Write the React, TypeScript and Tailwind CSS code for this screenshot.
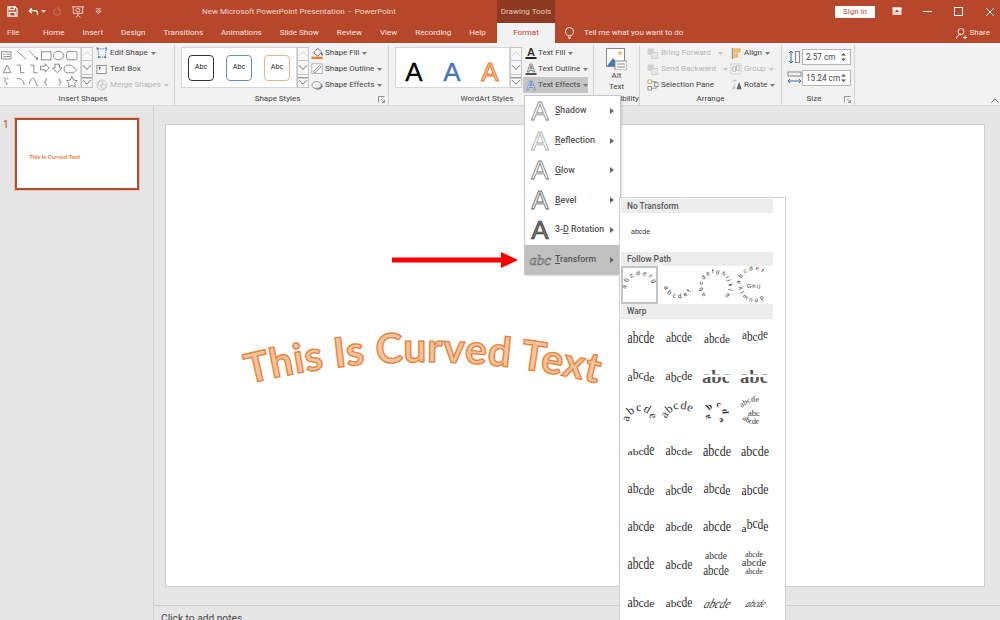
import React from "react";

const ui = "font-['Roboto',sans-serif]";

function Caret({ color = "#777", className = "ml-[3px]" }: { color?: string; className?: string }) {
  return (
    <svg width="5" height="3" viewBox="0 0 5 3" className={`shrink-0 ${className}`}>
      <path d="M0 0h5L2.500 3z" fill={color} />
    </svg>
  );
}

function Cmd({ icon, label, caret, disabled, className = "", caretClass }: { icon: React.ReactNode; label: string; caret?: boolean; disabled?: boolean; className?: string; caretClass?: string }) {
  return (
    <div className={`flex items-center h-[16px] whitespace-nowrap ${disabled ? "text-[#b4b4b4]" : "text-[#444]"} ${className}`}>
      <span className="w-[14px] h-[14px] flex items-center justify-start shrink-0">{icon}</span>
      <span>{label}</span>
      {caret && <Caret color={disabled ? "#c4c4c4" : "#777"} className={caretClass} />}
    </div>
  );
}

function Scroller() {
  const Cell = ({ d, line, first }: { d: string; line?: boolean; first?: boolean }) => (
    <div className={`flex-1 bg-[#f7f7f7] border border-[#c6c6c6] ${first ? "" : "border-t-0"} flex items-center justify-center`}>
      <svg width="11" height="12" viewBox="0 0 11 12" fill="none" stroke={first ? "#cfcfcf" : "#666"} strokeWidth="1">
        {line && <path d="M0 2.500h11" />}
        <path d={d} />
      </svg>
    </div>
  );
  return (
    <div className="w-[12px] h-[41px] mt-[2px] flex flex-col shrink-0">
      <Cell first d="M1 8l4.500-4.500L10 8" />
      <Cell d="M1 4l4.500 4.500L10 4" />
      <Cell line d="M1 5l4.500 4.500L10 5" />
    </div>
  );
}

function ShapeGallery() {
  return (
    <svg width="81" height="41" viewBox="0 0 81 41" fill="none" stroke="#7a7a7a" strokeWidth="0.9" className="bg-white border-y border-r border-[#d6d6d6] shrink-0 mt-[2px]">
      <rect x="0" y="4" width="10" height="7.500" />
      <path d="M2 6.500h2M5 6.500h4M2 9h7" />
      <path d="M16 3l10 9M29 3l9 9" />
      <path d="M38 12l-2-.5 1.500-1.500z" fill="#7a7a7a" />
      <rect x="42" y="4" width="10" height="8.500" />
      <ellipse cx="60" cy="8" rx="5.500" ry="4.500" />
      <rect x="68.500" y="3.500" width="11" height="9" rx="2.500" />
      <path d="M2 26l4-8 4 8z" />
      <path d="M16 18h4v8h4M30 18h4v8h4" />
      <path d="M41 19h5v-2.500l4 4.500-4 4.500v-2.500h-5z" />
      <path d="M56 17h5v4h2.500l-5 5-5-5h3z" />
      <path d="M69 18h4l6 5-3 3h-5a4 4 0 0 1-2-8z" />
      <path d="M2 31l3 2-2 2 3 2-1 2M6 31l1 2" />
      <path d="M16 32c5 0 7 2 8 7M29 38c2-8 5-8 7-2s2 3 3 3" />
      <path d="M48 32c-2 0-1 3-1.500 3.500S45 36 45 36s1.500 0 1.500 1S46 39 48 39M60 32c2 0 1 3 1.500 3.500S63 36 63 36s-1.500 0-1.500 1 .5 2-1.500 2" />
      <path d="M74 30l1.800 3.700 4 .6-2.900 2.800.7 4-3.600-1.900-3.600 1.900.7-4-2.900-2.800 4-.6z" />
    </svg>
  );
}

function StyleThumb({ c }: { c: string }) {
  return (
    <div className={`w-[26px] h-[26px] rounded-[4px] flex items-center justify-center text-[7.200px] text-[#222] bg-white ${c}`}>Abc</div>
  );
}

function Group({ label, className, children, launcher, shift }: { label: string; className: string; children: React.ReactNode; launcher?: boolean; shift?: boolean }) {
  return (
    <div className={`relative flex flex-col shrink-0 border-r border-[#d2d2d2] mt-[2px] ${className}`}>
      <div className="flex-1 flex min-h-0">{children}</div>
      <div className={`h-[13px] pt-[1px] text-center text-[8px] leading-[12px] text-[#444] whitespace-nowrap ${shift ? "pr-[8px]" : ""}`}>{label}</div>
      {launcher && (
        <svg width="7" height="7" viewBox="0 0 7 7" fill="none" stroke="#777" strokeWidth="0.8" className="absolute right-[3px] bottom-[2px]">
          <path d="M.5 6.500v-6h6M3 3l3 3M4 6.500h2.500V4" />
        </svg>
      )}
    </div>
  );
}

const WA = ({ fill, stroke, sw = 1 }: { fill: string; stroke: string; sw?: number }) => (
  <svg width="36" height="36" viewBox="0 0 36 36" className="shrink-0 overflow-visible">
    <text x="18" y="30.500" textAnchor="middle" fontSize="26" fontFamily="'Liberation Sans',sans-serif" fill={fill} stroke={stroke} strokeWidth={sw}>A</text>
  </svg>
);

function MiniA({ under, blue }: { under?: string; blue?: boolean }) {
  return (
    <svg width="14" height="14" viewBox="0 0 14 14" className="overflow-visible">
      <text x="7" y={under ? 10 : 12} textAnchor="middle" fontSize={under ? 11 : 13} fontFamily="'Liberation Sans',sans-serif" fontWeight="700" fill={blue ? "#dfe9f7" : under === "#222" ? "#333" : "#fff"} stroke={blue ? "#4472c4" : "#444"} strokeWidth={under === "#222" ? 0 : 0.6}>A</text>
      {under && <rect x="1.500" y="11" width="11" height="2" fill={under} />}
    </svg>
  );
}

const Ico = {
  edit: (
    <svg width="12" height="12" viewBox="0 0 13 13" fill="none" stroke="#40648f" strokeWidth="0.9" strokeDasharray="1.500 1">
      <path d="M2 2h9l-1 9H3z" />
      <rect x="0.500" y="0.500" width="2" height="2" fill="#4a7ebb" stroke="none" />
      <rect x="10" y="0.500" width="2" height="2" fill="#4a7ebb" stroke="none" />
      <rect x="2" y="10" width="2" height="2" fill="#4a7ebb" stroke="none" />
      <rect x="9" y="10" width="2" height="2" fill="#4a7ebb" stroke="none" />
    </svg>
  ),
  box: (
    <svg width="11" height="11" viewBox="0 0 12 12" fill="#fff" stroke="#777" strokeWidth="0.9">
      <rect x="1" y="1.500" width="10" height="9" />
      <path d="M3 3.500h2M4 3.500v3" stroke="#333" />
    </svg>
  ),
  merge: (
    <svg width="12" height="12" viewBox="0 0 13 13" fill="none" stroke="#c4c4c4">
      <circle cx="6.500" cy="6.500" r="5.500" />
      <circle cx="5" cy="5" r="2.500" />
      <circle cx="8" cy="8" r="2.500" />
    </svg>
  ),
  fill: (
    <svg width="13" height="14" viewBox="0 0 14 14" fill="none" stroke="#555" strokeWidth="0.9">
      <path d="M3 7l4-5 4.500 4-4 4.500z" fill="#fff" />
      <path d="M11.500 7c1 1.500 1 2.500.5 2.500s-.5-1-.5-2.500z" fill="#444" />
      <rect x="0.500" y="11" width="12" height="2.500" fill="#ed7d31" stroke="none" />
    </svg>
  ),
  outline: (
    <svg width="12" height="12" viewBox="0 0 14 14" fill="none" stroke="#5f7fa8" strokeWidth="0.9">
      <rect x="1" y="1" width="12" height="11" stroke="#999" fill="#fff" />
      <path d="M3 10L10 3l1.500 1.500L4.500 11.500z" fill="#fff" stroke="#666" />
    </svg>
  ),
  effects: (
    <svg width="12" height="12" viewBox="0 0 14 13">
      <ellipse cx="8" cy="8" rx="5.500" ry="4" fill="#8a8a8a" />
      <ellipse cx="6.500" cy="6.500" rx="5.500" ry="4" fill="#efefef" stroke="#777" strokeWidth="0.8" />
    </svg>
  ),
  bring: (
    <svg width="11" height="11" viewBox="0 0 12 12" fill="#d2d2d2">
      <rect x="0.500" y="0.500" width="7" height="7" />
      <rect x="5" y="5" width="6.500" height="6.500" fill="#e6e6e6" stroke="#cdcdcd" />
    </svg>
  ),
  pane: (
    <svg width="12" height="12" viewBox="0 0 13 13" fill="none" stroke="#777" strokeWidth="0.8">
      <rect x="1" y="1" width="4" height="4" stroke="#c79a2e" />
      <rect x="1" y="8" width="4" height="4" />
      <rect x="8" y="4" width="4" height="4" />
      <path d="M5 3h5v1M5 10h5V8" />
    </svg>
  ),
  align: (
    <svg width="12" height="13" viewBox="0 0 13 14">
      <rect x="2" y="1" width="1" height="12" fill="#777" />
      <rect x="3" y="2" width="8" height="3.500" fill="#f0c66a" stroke="#b99238" strokeWidth="0.5" />
      <rect x="3" y="7.500" width="5.500" height="3.500" fill="#f0c66a" stroke="#b99238" strokeWidth="0.5" />
    </svg>
  ),
  group: (
    <svg width="12" height="12" viewBox="0 0 13 13" fill="none" stroke="#bcbcbc" strokeDasharray="2 1">
      <rect x="1" y="1" width="11" height="11" />
      <rect x="3" y="4" width="3" height="5" strokeDasharray="none" />
      <rect x="7" y="3" width="3" height="5" strokeDasharray="none" />
    </svg>
  ),
  rotate: (
    <svg width="12" height="12" viewBox="0 0 13 13">
      <path d="M2 11l3.500-7v7z" fill="#c9c9c9" />
      <path d="M7 11l3-8 2.500 8z" fill="#666" />
      <path d="M3 3c1-2 3-2 4-1" fill="none" stroke="#777" strokeWidth="0.7" />
    </svg>
  ),
};

function SizeField({ value, icon }: { value: string; icon: React.ReactNode }) {
  return (
    <div className="flex items-center">
      <span className="w-[16px] flex justify-center">{icon}</span>
      <div className="w-[49px] h-[16px] bg-white border border-[#b5b5b5] flex items-center justify-between pl-[3px] pr-[4px] text-[#444] text-[8.200px] whitespace-nowrap">
        <span>{value}</span>
        <svg width="5" height="10" viewBox="0 0 5 10" className="shrink-0"><path d="M2.500 1L5 3.500H0zM2.500 9L0 6.500h5z" fill="#555" /></svg>
      </div>
    </div>
  );
}

function Ribbon() {
  return (
    <div className={`flex h-[63px] bg-[#f2f2f2] border-b border-[#d9d9d9] text-[8px] ${ui}`}>
      <Group label="Insert Shapes" className="w-[175px]" shift>
        <ShapeGallery />
        <Scroller />
        <div className="ml-[3px]">
          <Cmd icon={Ico.edit} label="Edit Shape" caret />
          <Cmd icon={Ico.box} label="Text Box" />
          <Cmd icon={Ico.merge} label="Merge Shapes" caret disabled />
        </div>
      </Group>
      <Group label="Shape Styles" className="w-[214px]" launcher shift>
        <div className="ml-[6px] mt-[2px] w-[116px] h-[41px] bg-white border border-[#d6d6d6] flex items-center pl-[6px] gap-[12px] shrink-0">
          <StyleThumb c="border-[1.500px] border-[#333]" />
          <StyleThumb c="border border-[#6f8db9]" />
          <StyleThumb c="border border-[#e5b48d]" />
        </div>
        <Scroller />
        <div className="ml-[2px]">
          <Cmd icon={Ico.fill} label="Shape Fill" caret />
          <Cmd icon={Ico.outline} label="Shape Outline" caret />
          <Cmd icon={Ico.effects} label="Shape Effects" caret />
        </div>
      </Group>
      <Group label="WordArt Styles" className="w-[205px]" launcher shift>
        <div className="ml-[6px] mt-[2px] w-[115px] h-[41px] bg-white border border-[#d6d6d6] flex items-center gap-[2px] shrink-0">
          <WA fill="#000" stroke="#000" sw={0.3} />
          <WA fill="#4472c4" stroke="#4472c4" sw={0.3} />
          <WA fill="#f8d0b0" stroke="#ed7d31" sw={1.100} />
        </div>
        <Scroller />
        <div className="ml-[1px]">
          <Cmd className="pl-[1px]" icon={<MiniA under="#222" />} label="Text Fill" caret />
          <Cmd className="pl-[1px]" icon={<MiniA under="#555" />} label="Text Outline" caret />
          <Cmd className="pl-[1px] w-[65px] bg-[#c6c6c6]" icon={<MiniA blue />} label="Text Effects" caret />
        </div>
      </Group>
      <Group label="Accessibility" className="w-[46px]">
        <div className="flex-1 flex flex-col items-center pt-[3px] text-[#444]">
          <svg width="21" height="22" viewBox="0 0 21 22" className="shrink-0">
            <rect x="0.500" y="0.500" width="18" height="18" fill="#fff" stroke="#888" />
            <circle cx="14" cy="5" r="2" fill="#f0c66a" />
            <path d="M1 18l6-8 4 5 2-2 5 5z" fill="#3e7ab5" />
            <rect x="9" y="13" width="12" height="9" fill="#fff" stroke="#888" />
            <path d="M11 16h8M11 19h8" stroke="#888" />
          </svg>
          <span className="leading-[11px]">Alt</span>
          <span className="leading-[11px]">Text</span>
        </div>
      </Group>
      <Group label="Arrange" className="w-[142px]">
        <div className="pl-[7px] w-[90px] shrink-0">
          <Cmd icon={Ico.bring} label="Bring Forward" caret disabled caretClass="ml-[7px]" />
          <Cmd icon={Ico.bring} label="Send Backward" caret disabled caretClass="ml-[7px]" />
          <Cmd icon={Ico.pane} label="Selection Pane" />
        </div>
        <div>
          <Cmd icon={Ico.align} label="Align" caret />
          <Cmd icon={Ico.group} label="Group" caret disabled />
          <Cmd icon={Ico.rotate} label="Rotate" caret />
        </div>
      </Group>
      <Group label="Size" className="w-[73px]" launcher shift>
        <div className="pl-[4px] pt-[4px] flex flex-col gap-[5px]">
          <SizeField value="2.57 cm" icon={<svg width="13" height="14" viewBox="0 0 13 14" fill="none"><path d="M3 1v12M1 3l2-2 2 2M1 11l2 2 2-2" stroke="#2f6ea8" /><rect x="7.500" y="1.500" width="4" height="11" stroke="#888" /></svg>} />
          <SizeField value="15.24 cm" icon={<svg width="15" height="14" viewBox="0 0 15 14" fill="none"><rect x="1" y="1" width="13" height="4" stroke="#888" /><path d="M1 10h13M3 8l-2 2 2 2M12 8l2 2-2 2" stroke="#2f6ea8" /></svg>} />
        </div>
      </Group>
      <div className="flex-1 flex justify-end items-end pr-[1px] pb-[2px]">
        <svg width="8" height="5" viewBox="0 0 8 5" fill="none" stroke="#666"><path d="M.5 4.500L4 1l3.500 3.500" /></svg>
      </div>
    </div>
  );
}

function TitleBar() {
  return (
    <div className={`relative flex items-center h-[23px] bg-[#b7472a] text-white ${ui}`}>
      <div className="flex items-center w-[202px]">
        <svg width="11" height="11" viewBox="0 0 12 12" fill="none" stroke="#fff" strokeWidth="1.300" className="ml-[7px]"><path d="M1 1h8l2 2v8H1zM3 1v3h5V1M3 11V7h6v4" /></svg>
        <svg width="11" height="10" viewBox="0 0 13 11" fill="none" stroke="#fff" strokeWidth="1.500" className="ml-[10px]"><path d="M4.500 1L1.500 4l3 3M2 4h6c3 0 4 2 3 5" /></svg>
        <Caret color="#f5d6cc" className="ml-[2px]" />
        <svg width="10" height="10" viewBox="0 0 12 12" fill="none" stroke="#d1806a" strokeWidth="1.100" className="ml-[6px]"><path d="M8 2.500a4 4 0 1 1-3-.5M7.500 0v3H10" /></svg>
        <svg width="14" height="14" viewBox="0 0 15 14" fill="none" stroke="#f2d9d1" className="ml-[9px]"><path d="M1 1.500h13M2.500 1.500v7h10v-7M7.500 8.500v2M5 13l2.500-2.500L10 13" /><circle cx="7.500" cy="5" r="2" /></svg>
        <svg width="7" height="7" viewBox="0 0 8 7" fill="none" stroke="#f2d9d1" className="ml-[10px]"><path d="M1 .5h6M1 3l3 3 3-3z" /></svg>
      </div>
      <div className="text-[8px] text-[#f3d8cf] whitespace-pre w-[295px]">New Microsoft PowerPoint Presentation  -  PowerPoint</div>
      <div className="h-[23px] w-[58px] bg-[#8e3a23] text-[#e9c6ba] text-[8px] flex items-center justify-center whitespace-nowrap">Drawing Tools</div>
      <div className="flex-1" />
      <div className="w-[40px] h-[12px] bg-white text-[#b7472a] text-[8px] flex items-center justify-center mr-[17px]">Sign in</div>
      <div className="flex items-center pr-[5px] gap-[21px]">
        <svg width="10" height="9" viewBox="0 0 10 9"><rect x="0.500" y="0.500" width="9" height="7.500" fill="#f3d8cf" /><rect x="0.500" y="0.500" width="9" height="2" fill="#fff" /><path d="M5 2.500l2 2.500H3z" fill="#b7472a" /></svg>
        <svg width="9" height="9" viewBox="0 0 9 9" stroke="#fff"><path d="M0 4.500h9" /></svg>
        <svg width="9" height="9" viewBox="0 0 9 9" fill="none" stroke="#fff" className="mx-[1px]"><rect x="0.500" y="0.500" width="8" height="8" /></svg>
        <svg width="10" height="10" viewBox="0 0 10 10" stroke="#fff"><path d="M1 1l8 8M9 1l-8 8" /></svg>
      </div>
    </div>
  );
}

function Tabs() {
  const tabs = ["Home", "Insert", "Design", "Transitions", "Animations", "Slide Show", "Review", "View", "Recording", "Help"];
  return (
    <div className={`flex items-center h-[20px] bg-[#b7472a] text-[#f9e6e0] text-[8px] ${ui}`}>
      <div className="flex items-center w-[497px] shrink-0">
        <div className="pl-[7px] w-[43px]">File</div>
        <div className="flex gap-[18px]">
          {tabs.map((t) => <div key={t}>{t}</div>)}
        </div>
      </div>
      <div className="w-[58px] h-[20px] bg-[#f2f2f2] text-[#b7472a] flex items-center justify-center">Format</div>
      <svg width="9" height="12" viewBox="0 0 9 12" fill="none" stroke="#fff" strokeWidth="0.9" className="ml-[10px]"><path d="M2.500 8.500C1 7 .5 6 .5 4.500a4 4 0 0 1 8 0C8.500 6 8 7 6.500 8.500zM3 10h3M3.500 11.500h2" /></svg>
      <div className="ml-[10px]">Tell me what you want to do</div>
      <div className="flex-1" />
      <div className="flex items-center pr-[10px] gap-[3px]">
        <svg width="11" height="11" viewBox="0 0 11 11" fill="none" stroke="#fff" strokeWidth="0.9"><circle cx="5" cy="3.500" r="3" /><path d="M0.500 11c0-3 2-4.500 4.500-4.500M7 9.500h4M9 7.500v4" /></svg>
        <span>Share</span>
      </div>
    </div>
  );
}

function Sidebar() {
  return (
    <div className={`w-[154px] shrink-0 bg-[#e6e6e6] border-r border-[#cfcfcf] flex pt-[12px] pl-[3px] ${ui}`}>
      <div className="w-[12px] text-[10px] leading-[10px] text-[#b7472a] pt-[2px]">1</div>
      <div className="w-[124px] h-[72px] bg-white border-2 border-[#b04f33] outline outline-1 outline-[#f3bda9] flex items-center">
        <div className="ml-[12px] mt-[6px] text-[6.100px] font-black text-[#ef8b4b] whitespace-nowrap font-['Lato',sans-serif]">This Is Curved Text</div>
      </div>
    </div>
  );
}

function Slide() {
  return (
    <div className="flex-1 flex flex-col min-w-0 bg-[#e6e6e6]">
      <div className="h-[500px] shrink-0 pt-[18px] pl-[11px] pr-[15px] border-b border-[#cdcdcd]">
        <div className="relative h-[463px] bg-white border border-[#cdcdcd]">
          <svg viewBox="165 124 820 463" className="absolute inset-0 w-full h-full">
            <defs><path id="curve" d="M247 384Q422 340 600 384" /></defs>
            <text fontFamily="Lato,sans-serif" fontWeight="700" fontSize="41" fill="#f8c39b" stroke="#e5853f" strokeWidth="1.400">
              <textPath href="#curve" textLength="354" startOffset="0">This Is Curved Text</textPath>
            </text>
          </svg>
        </div>
      </div>
      <div className={`pl-[7px] pt-[5px] text-[10.200px] text-[#444] whitespace-nowrap ${ui}`}>Click to add notes</div>
    </div>
  );
}

function MenuRow({ icon, pre, u, post, active }: { icon: React.ReactNode; pre?: string; u: string; post: string; active?: boolean }) {
  return (
    <div className={`h-[29.800px] flex items-center ${active ? "bg-[#c0c0c0]" : ""}`}>
      <div className="w-[30px] flex justify-center shrink-0">{icon}</div>
      <div className="flex-1 text-[8.800px] font-medium text-[#555] whitespace-nowrap">{pre}<span className="underline">{u}</span>{post}</div>
      <svg width="4" height="6" viewBox="0 0 4 6" className="mr-[6px] shrink-0"><path d="M0 0l4 3-4 3z" fill="#666" /></svg>
    </div>
  );
}

function OutA({ fill = "#fff", stroke = "#888", sw = 0.8 }: { fill?: string; stroke?: string; sw?: number }) {
  return (
    <svg width="22" height="22" viewBox="0 0 22 22" className="overflow-visible">
      <text x="11" y="20" textAnchor="middle" fontSize="26" fontFamily="'Liberation Sans',sans-serif" fill={fill} stroke={stroke} strokeWidth={sw}>A</text>
    </svg>
  );
}

function TextEffectsMenu() {
  return (
    <div className={`absolute left-[524px] top-[95px] w-[97px] h-[180px] bg-white border border-[#c8c8c8] shadow-[1px_1px_2px_rgba(0,0,0,0.15)] ${ui}`}>
      <MenuRow icon={<OutA />} u="S" post="hadow" />
      <MenuRow icon={<OutA fill="#fff" stroke="#aaa" />} u="R" post="eflection" />
      <MenuRow icon={<OutA stroke="#777" />} u="G" post="low" />
      <MenuRow icon={<OutA fill="#f2f2f2" stroke="#666" />} u="B" post="evel" />
      <MenuRow icon={<OutA fill="#777" stroke="#333" sw={0.7} />} pre="3-" u="D" post=" Rotation" />
      <MenuRow active icon={<svg width="24" height="18" viewBox="0 0 24 18" className="overflow-visible"><text x="12" y="14" textAnchor="middle" fontSize="15" fontStyle="italic" fontFamily="'Liberation Serif',serif" fill="#c0c0c0" stroke="#555" strokeWidth="0.5">abc</text></svg>} u="T" post="ransform" />
    </div>
  );
}

const ADV = [0.444, 0.5, 0.444, 0.5, 0.444];

function Warp({ h = [1.3, 1.3, 1.3, 1.3, 1.3], y = [23, 23, 23, 23, 23], w = 27 }: { h?: number[]; y?: number[]; w?: number }) {
  const size = 12;
  const sx = w / (2.332 * size);
  let x = (36 - w) / 2 + 1;
  return (
    <svg width="36" height="36" viewBox="0 0 36 36" className="overflow-visible" fontFamily="'Liberation Serif',serif" fontSize={size} fill="#2c2c2c">
      {"abcde".split("").map((c, i) => {
        const tx = x;
        x += ADV[i] * size * sx;
        return <text key={i} transform={`translate(${tx} ${y[i]}) scale(${sx} ${h[i]})`}>{c}</text>;
      })}
    </svg>
  );
}

function ArcText({ d, id, size = 9, text = "abcde", bold, ls = 0, fill = "#333" }: { d: string; id: string; size?: number; text?: string; bold?: boolean; ls?: number; fill?: string }) {
  return (
    <>
      <defs><path id={id} d={d} /></defs>
      <text fontSize={size} fontWeight={bold ? 700 : 400} letterSpacing={ls} fill={fill}><textPath href={`#${id}`}>{text}</textPath></text>
    </>
  );
}

const Box = ({ children, serif = true }: { children: React.ReactNode; serif?: boolean }) => (
  <svg width="36" height="36" viewBox="0 0 36 36" className="shrink-0 overflow-visible" fontFamily={serif ? "'Liberation Serif',serif" : "'Liberation Sans',sans-serif"}>{children}</svg>
);

const Button = () => (
  <Box>
    <text x="4" y="25" fontSize="18" textLength="28" lengthAdjust="spacingAndGlyphs" fill="#555" fontWeight="700">abc</text>
    <rect x="2" y="16.500" width="32" height="2.500" fill="#fff" />
  </Box>
);

function Cell({ children }: { children: React.ReactNode }) {
  return <div className="flex items-center justify-center">{children}</div>;
}

function Submenu() {
  const Head = ({ children, tall }: { children: React.ReactNode; tall?: boolean }) => (
    <div className={`${tall ? "h-[15px]" : "h-[14px]"} bg-[#ececec] pl-[6px] text-[8.400px] leading-[14px] font-medium text-[#555]`}>{children}</div>
  );
  return (
    <div className={`absolute left-[619px] top-[197px] w-[167px] h-[423px] bg-white border-l border-t border-r border-[#cfcfcf] overflow-hidden pt-[1px] pl-[1px] ${ui}`}>
      <div className="w-[152px]">
        <Head>No Transform</Head>
        <div className="h-[39px] flex items-center pl-[10px] font-['Liberation_Sans',sans-serif] text-[7px] text-[#333]">abcde</div>
        <Head>Follow Path</Head>
        <div className="grid grid-cols-4 h-[38px]">
          <div className="flex items-center justify-center w-[37px] h-[38px] border-[2.500px] border-[#c4c4c4]">
            <Box serif={false}><ArcText id="f1" d="M4 22A14 14 0 0 1 32 22" size={6.500} text="abcdefg" ls={2.500} /></Box>
          </div>
          <Cell>
            <Box serif={false}><ArcText id="f2" d="M4 20A15 15 0 0 0 33 20" size={6.500} text="abcdefg" ls={3} /></Box>
          </Cell>
          <Cell>
            <Box serif={false}><ArcText id="f3" d="M8 28A13 13 0 1 1 20 32" size={6} text="abcdefghijklm" ls={2} /></Box>
          </Cell>
          <Cell>
            <Box serif={false}>
              <ArcText id="f4" d="M4 17A14 14 0 0 1 32 17" size={6} text="abcdef" ls={2.500} />
              <text x="18" y="21" textAnchor="middle" fontSize="6" letterSpacing="1" fill="#333">Ghij</text>
              <ArcText id="f4b" d="M3 20A15 15 0 0 0 33 20" size={6} text="klmnop" ls={3} />
            </Box>
          </Cell>
        </div>
        <Head tall>Warp</Head>
        <div className="grid grid-cols-4 auto-rows-[37.700px]">
          <Cell><Warp h={[1.4, 1.4, 1.4, 1.4, 1.4]} /></Cell>
          <Cell><Warp w={26} h={[1, 1.15, 1.2, 1.25, 1.05]} y={[22, 22, 22, 22, 21]} /></Cell>
          <Cell><Warp w={26} h={[1, 1.15, 1.05, 1, 0.85]} y={[23, 23, 23, 23, 23]} /></Cell>
          <Cell><Warp w={26} h={[1, 1.2, 1.1, 1.1, 1.1]} y={[19, 21, 21, 20, 18]} /></Cell>

          <Cell><Warp w={27} h={[1.1, 1.2, 1.1, 1.1, 1]} y={[23, 21, 21, 23, 24]} /></Cell>
          <Cell><Warp w={27} h={[1.1, 1.2, 1, 1, 1]} y={[22, 24, 24, 22, 22]} /></Cell>
          <Cell><Button /></Cell>
          <Cell><Button /></Cell>

          <Cell><Box><ArcText id="w1" d="M7 27A11 11 0 0 1 29 27" size={12} ls={1} /></Box></Cell>
          <Cell><Box><ArcText id="w2" d="M6 24Q14 8 31 17" size={12} ls={0.500} /></Box></Cell>
          <Cell><Box><ArcText id="w3" d="M13.500 23A6.500 6.500 0 1 1 21 24" size={9} bold ls={2.500} /></Box></Cell>
          <Cell>
            <Box>
              <ArcText id="w4" d="M6 13Q18 0 30 13" size={8} />
              <text x="18" y="21" textAnchor="middle" fontSize="8.500" fill="#333">abc</text>
              <ArcText id="w4b" d="M6 24Q18 34 30 24" size={8} />
            </Box>
          </Cell>

          <Cell><Warp w={27} h={[0.7, 0.75, 0.85, 1.2, 1.4]} y={[22, 22, 22, 22, 22]} /></Cell>
          <Cell><Warp w={27} h={[1.3, 1.1, 0.8, 0.8, 0.65]} y={[22, 22, 22, 22, 22]} /></Cell>
          <Cell><Warp w={28} h={[1.4, 1.4, 1.3, 1.3, 1.3]} y={[23, 23, 23, 23, 23]} /></Cell>
          <Cell><Warp w={28} h={[1.3, 1.3, 1.3, 1.3, 1.3]} y={[23, 23, 23, 23, 23]} /></Cell>

          <Cell><Warp w={27} h={[1.2, 1.3, 1.1, 1.2, 1.2]} y={[22, 21.500, 23, 24, 24]} /></Cell>
          <Cell><Warp w={27} h={[1.1, 1.2, 1.1, 1.3, 1.3]} y={[24, 24, 23, 22, 22]} /></Cell>
          <Cell><Warp w={27} h={[1.3, 1.3, 1.3, 1.3, 1.3]} y={[22, 22, 23, 23, 24]} /></Cell>
          <Cell><Warp w={27} h={[1.3, 1.3, 1.3, 1.3, 1.3]} y={[24, 24, 23, 23, 23]} /></Cell>

          <Cell><Warp w={27} h={[1.25, 1.25, 1.15, 1.2, 1.25]} /></Cell>
          <Cell><Warp w={27} h={[1.2, 1, 0.9, 1, 1.2]} /></Cell>
          <Cell><Warp w={28} h={[1.25, 1.3, 1.25, 1.3, 1.25]} /></Cell>
          <Cell><Warp w={27} h={[0.9, 1.2, 1.2, 1.2, 1.2]} y={[24, 21, 20, 21, 23]} /></Cell>

          <Cell><Warp w={27} h={[1.4, 1.4, 1.4, 1.4, 1.4]} /></Cell>
          <Cell><Warp w={27} h={[1.2, 1, 0.85, 1, 1.2]} /></Cell>
          <Cell>
            <Box>
              <text x="18" y="13" textAnchor="middle" fontSize="9.500" fill="#333">abcde</text>
              <text textAnchor="middle" fontSize="11" transform="translate(18 29) scale(1 1.350)" fill="#333">abcde</text>
            </Box>
          </Cell>
          <Cell>
            <Box>
              <text x="18" y="11" textAnchor="middle" fontSize="7.500" fill="#333">abcde</text>
              <text x="18" y="20" textAnchor="middle" fontSize="10.500" fill="#333">abcde</text>
              <text x="18" y="28" textAnchor="middle" fontSize="7.500" fill="#333">abcde</text>
            </Box>
          </Cell>

          <Cell><Warp w={27} h={[1.2, 1.2, 1, 0.9, 0.8]} /></Cell>
          <Cell><Warp w={27} h={[0.8, 0.9, 1, 1.2, 1.3]} /></Cell>
          <Cell>
            <Box>
              <text textAnchor="middle" fontSize="11" fontStyle="italic" transform="translate(18 24) skewX(-20) scale(1 1.200)" fill="#333">abcde</text>
            </Box>
          </Cell>
          <Cell>
            <Box>
              <text textAnchor="middle" fontSize="8" fontStyle="italic" transform="translate(18 23) skewX(-30) scale(1 1.300)" fill="#333">abcde</text>
            </Box>
          </Cell>
        </div>
      </div>
    </div>
  );
}

export default function App() {
  return (
    <div className="relative w-[1000px] h-[620px] overflow-hidden bg-[#e6e6e6]">
      <TitleBar />
      <Tabs />
      <Ribbon />
      <div className="flex h-[514px]">
        <Sidebar />
        <Slide />
      </div>
      <TextEffectsMenu />
      <Submenu />
      <svg width="130" height="20" viewBox="0 0 130 20" className="absolute left-[392px] top-[250px]">
        <path d="M0 7.500h109V2l17 8-17 8v-5.500H0z" fill="#f80000" />
      </svg>
    </div>
  );
}
